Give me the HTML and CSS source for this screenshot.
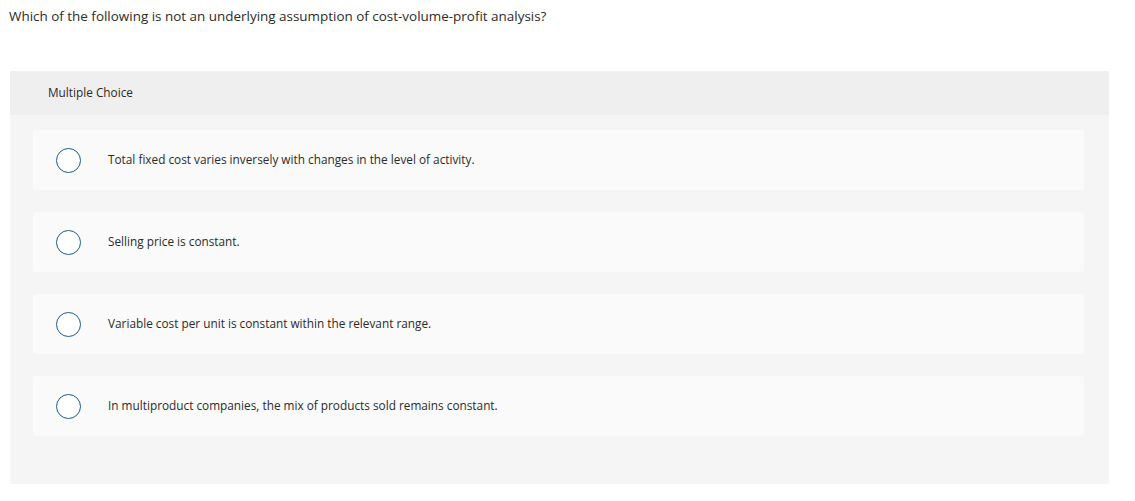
FILE: index.html
```html
<!DOCTYPE html>
<html>
<head>
<meta charset="utf-8">
<link rel="stylesheet" href="styles.css">
</head>
<body>
<p class="question">Which of the following is not an underlying assumption of cost-volume-profit analysis?</p>
<div class="panel">
  <div class="panel-head">Multiple Choice</div>
  <div class="options">
    <div class="option"><span class="radio"></span><span class="label">Total fixed cost varies inversely with changes in the level of activity.</span></div>
    <div class="option"><span class="radio"></span><span class="label">Selling price is constant.</span></div>
    <div class="option"><span class="radio"></span><span class="label">Variable cost per unit is constant within the relevant range.</span></div>
    <div class="option"><span class="radio"></span><span class="label">In multiproduct companies, the mix of products sold remains constant.</span></div>
  </div>
</div>
</body>
</html>
```
FILE: styles.css
```css
* { box-sizing: border-box; }
body {
  margin: 0;
  background: #fff;
  font-family: "Open Sans", "Liberation Sans", sans-serif;
  color: #2b2b2b;
}
.question {
  margin: 0;
  padding: 7px 0 0 9px;
  font-size: 13.45px;
  line-height: 18px;
}
.panel {
  margin: 46px 0 0 10px;
  width: 1099px;
  height: 413px;
  background: #f5f5f5;
  border-radius: 2px;
}
.panel-head {
  height: 44px;
  background: #efefef;
  padding: 0 0 2px 38px;
  display: flex;
  align-items: center;
  font-size: 11.8px;
}
.options {
  display: flex;
  flex-direction: column;
  gap: 22px;
  padding: 15px 25px 0 23px;
}
.option {
  height: 60px;
  background: #fafafa;
  border-radius: 3px;
  display: flex;
  align-items: center;
  padding-left: 23px;
  font-size: 11.8px;
}
.radio {
  width: 25px;
  height: 25px;
  border: 1.5px solid #1b5a96;
  border-radius: 50%;
  background: #fff;
  flex: none;
}
.label {
  margin-left: 27px;
  position: relative;
  top: -1px;
}
```
